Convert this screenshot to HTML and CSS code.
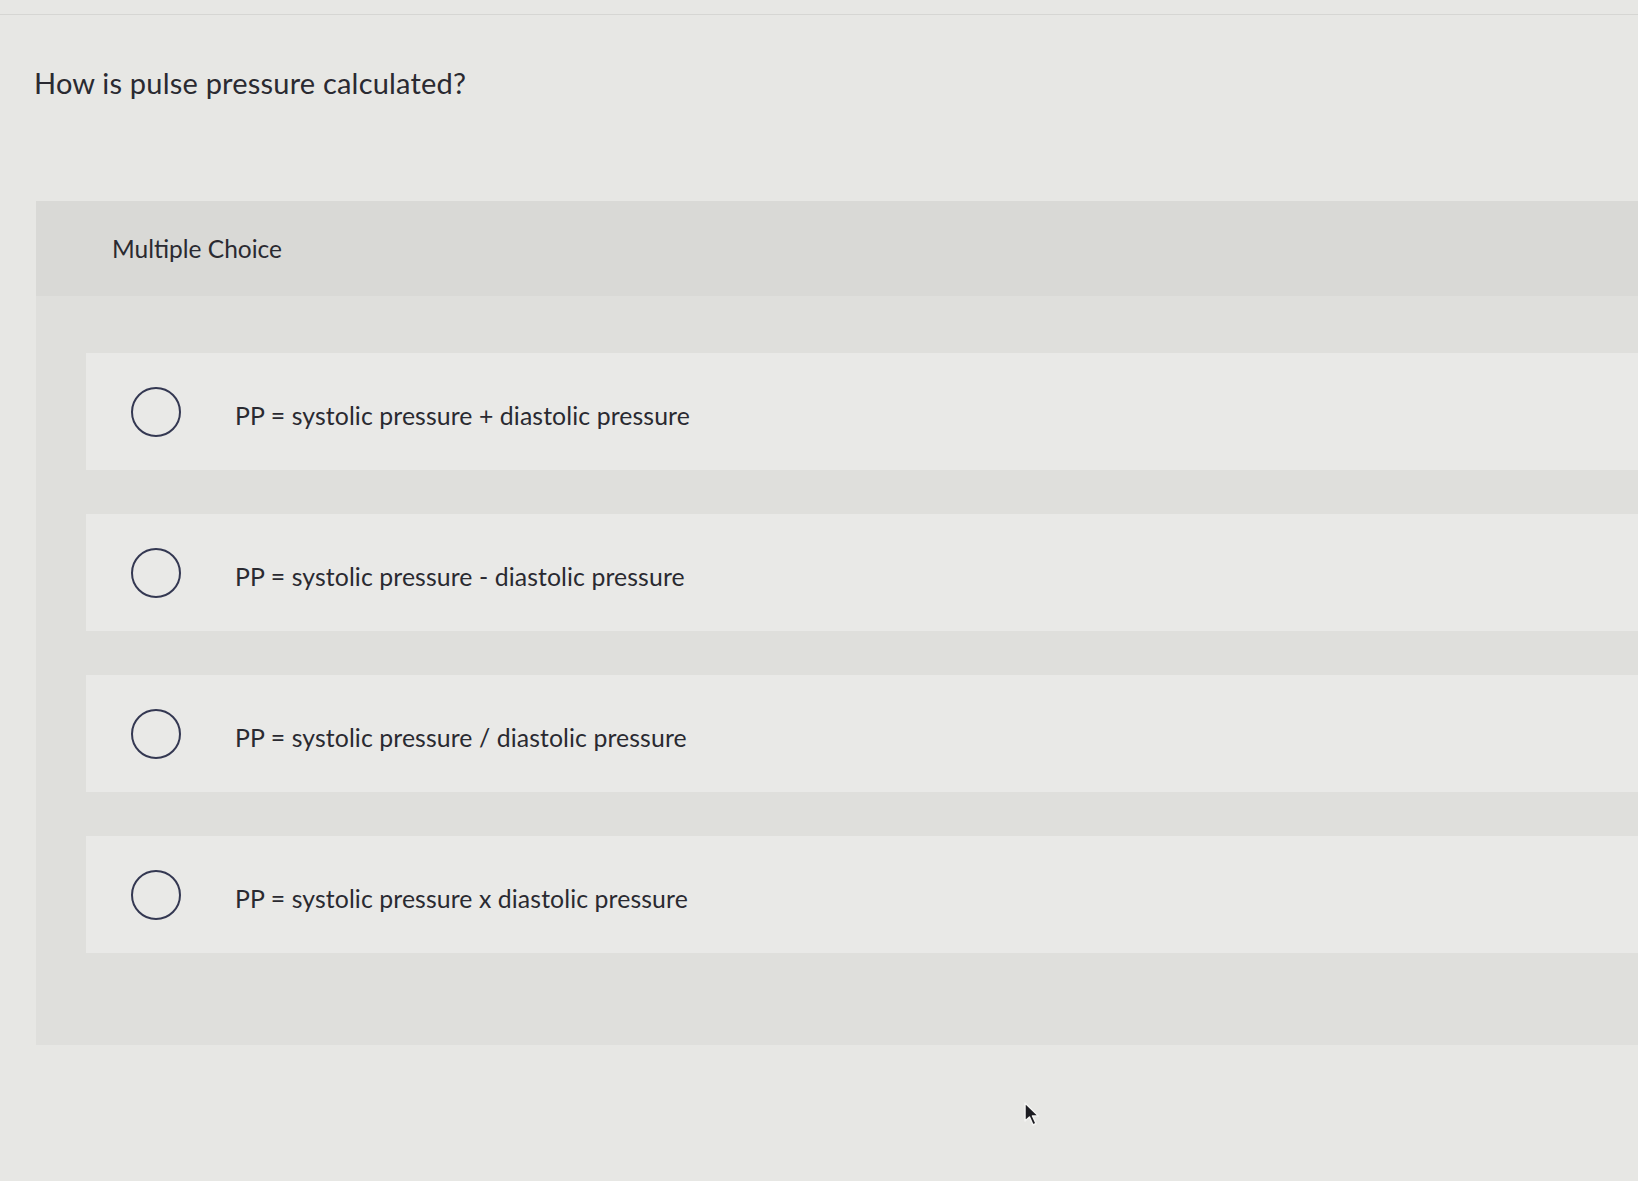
FILE: index.html
```html
<!DOCTYPE html>
<html>

<head>
    <title>Multiple Choice</title>
    <link rel="stylesheet" href="styles.css">
</head>

<body>
    <div class="topline"></div>
    <div class="page">
        <h1 class="question">How is pulse pressure calculated?</h1>

        <div class="panel">
            <div class="panel-head">Multiple Choice</div>
            <div class="choices">
                <label class="choice">
                    <span class="radio"></span>
                    <span class="choice-text">PP = systolic pressure + diastolic pressure</span>
                </label>
                <label class="choice">
                    <span class="radio"></span>
                    <span class="choice-text">PP = systolic pressure - diastolic pressure</span>
                </label>
                <label class="choice">
                    <span class="radio"></span>
                    <span class="choice-text">PP = systolic pressure / diastolic pressure</span>
                </label>
                <label class="choice">
                    <span class="radio"></span>
                    <span class="choice-text">PP = systolic pressure x diastolic pressure</span>
                </label>
            </div>
        </div>
    </div>

    <!-- mouse pointer -->
    <svg class="cursor" width="18" height="26" viewBox="0 0 18 26">
        <path d="M1 1 L1 19 L5.5 15 L9 23 L12 21.5 L8.5 14 L14.5 14 Z" fill="#1d1d22" stroke="#f4f4f2" stroke-width="1.5" stroke-linejoin="round" />
    </svg>
</body>

</html>
```

FILE: styles.css
```css
body {
    font-family: Lato, "Open Sans", Arial, sans-serif;
    background-color: #e7e7e4;
    margin: 0;
    padding: 0;
    color: #2a2a31;
    position: relative;
    min-height: 1181px;
}

.topline {
    height: 14px;
    border-bottom: 1px solid #d6d6d3;
}

.page {
    padding: 48px 0 0 34px;
}

.question {
    font-size: 29px;
    font-weight: 400;
    margin: 0;
    line-height: 40px;
    letter-spacing: 0.2px;
}

.panel {
    margin-top: 98px;
    margin-left: 2px;
    background-color: #dfdfdc;
    padding-bottom: 92px;
}

.panel-head {
    background-color: #d9d9d6;
    height: 95px;
    display: flex;
    align-items: center;
    padding-left: 76px;
    font-size: 24.5px;
    box-sizing: border-box;
}

.choices {
    display: flex;
    flex-direction: column;
    gap: 44px;
    padding: 57px 0 0 50px;
}

.choice {
    display: flex;
    align-items: center;
    height: 117px;
    background-color: #e9e9e7;
    padding-left: 45px;
}

.radio {
    width: 46px;
    height: 46px;
    border: 2px solid #343852;
    border-radius: 50%;
    flex-shrink: 0;
}

.choice-text {
    margin-left: 54px;
    margin-top: 8px;
    font-size: 24.8px;
    letter-spacing: 0.1px;
}

.cursor {
    position: absolute;
    left: 1024px;
    top: 1102px;
}
```
